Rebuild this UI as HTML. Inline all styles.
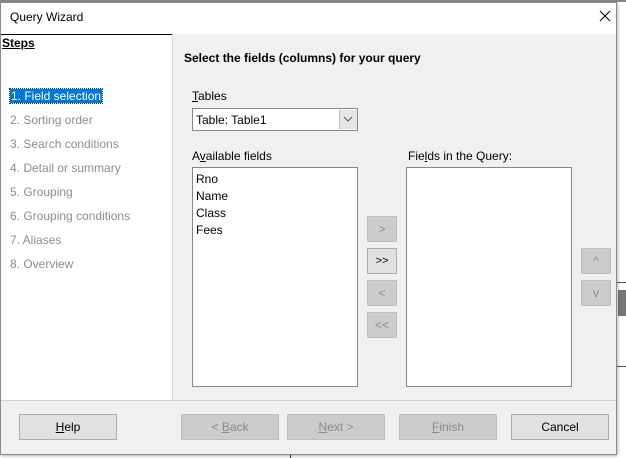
<!DOCTYPE html>
<html><head><style>
body{margin:0;width:626px;height:458px;overflow:hidden;background:#fff;font-family:"Liberation Sans",sans-serif;font-size:12px;position:relative}
.a{position:absolute}
.btn{position:absolute;height:24px;border:1px solid #adadad;background:#e1e1e1;text-align:center;line-height:24px;color:#000;box-sizing:border-box}
.dis{background:#cccccc;border-color:#bfbfbf;color:#8a8a8a}
.lb{position:absolute;background:#fff;border:1px solid #828790;box-sizing:border-box}
.st{position:absolute;left:10px;color:#8d8d8d}
</style></head><body>
<div class="a" style="left:617px;top:282px;width:9px;height:1px;background:#555"></div>
<div class="a" style="left:618px;top:290px;width:8px;height:26px;background:#777"></div>
<div class="a" style="left:617px;top:366px;width:9px;height:1px;background:#555"></div>
<div class="a" style="left:290px;top:455px;width:1px;height:3px;background:#333"></div>
<div class="a" style="left:0;top:0;width:626px;height:2px;background:#888"></div>
<div class="a" style="left:0;top:2px;width:617px;height:453px;background:#f0f0f0;border:1px solid #8a8a8a;box-sizing:border-box;box-shadow:1px 1px 3px rgba(0,0,0,.3)"></div>
<div class="a" style="left:1px;top:3px;width:615px;height:31px;background:#fff"></div>
<div class="a" style="left:10px;top:10px;font-size:12px">Query Wizard</div>
<svg class="a" style="left:599px;top:10px" width="12" height="12"><path d="M1 1L11 11M11 1L1 11" stroke="#000" stroke-width="1"/></svg>
<div class="a" style="left:1px;top:34px;width:171px;height:366px;background:#fff"></div>
<div class="a" style="left:1px;top:34px;width:171px;height:1px;background:#000"></div>
<div class="a" style="left:172px;top:34px;width:1px;height:366px;background:#d8d8d8"></div>
<div class="a" style="left:2px;top:36px;font-weight:bold;text-decoration:underline">Steps</div>
<div class="a" style="left:10px;top:89px;background:#0078d7;color:#fff;padding:0 1px;outline:1px dotted #333">1. Field selection</div>
<div class="st" style="top:113px">2. Sorting order</div>
<div class="st" style="top:137px">3. Search conditions</div>
<div class="st" style="top:161px">4. Detail or summary</div>
<div class="st" style="top:185px">5. Grouping</div>
<div class="st" style="top:209px">6. Grouping conditions</div>
<div class="st" style="top:233px">7. Aliases</div>
<div class="st" style="top:257px">8. Overview</div>
<div class="a" style="left:184px;top:51px;font-weight:bold">Select the fields (columns) for your query</div>
<div class="a" style="left:192px;top:89px"><u>T</u>ables</div>
<div class="lb" style="left:192px;top:108px;width:166px;height:23px"></div>
<div class="a" style="left:196px;top:113px">Table: Table1</div>
<div class="a" style="left:339px;top:110px;width:17px;height:19px;background:#e5e5e5;border-left:1px solid #bbb"></div>
<svg class="a" style="left:343px;top:116px" width="10" height="6"><path d="M1 1L5 5L9 1" stroke="#555" fill="none"/></svg>
<div class="a" style="left:192px;top:149px">A<u>v</u>ailable fields</div>
<div class="lb" style="left:192px;top:167px;width:166px;height:220px"></div>
<div class="a" style="left:196px;top:171px;line-height:17px">Rno<br>Name<br>Class<br>Fees</div>
<div class="a" style="left:408px;top:149px">Fie<u>l</u>ds in the Query:</div>
<div class="lb" style="left:406px;top:167px;width:166px;height:220px"></div>
<div class="btn dis" style="left:367px;top:216px;width:30px;height:26px;line-height:24px">&gt;</div>
<div class="btn" style="left:367px;top:248px;width:30px;height:26px;line-height:24px;font-size:11px">&gt;&gt;</div>
<div class="btn dis" style="left:367px;top:280px;width:30px;height:26px;line-height:24px">&lt;</div>
<div class="btn dis" style="left:367px;top:312px;width:30px;height:26px;line-height:24px">&lt;&lt;</div>
<div class="btn dis" style="left:581px;top:248px;width:30px;height:26px;line-height:24px">^</div>
<div class="btn dis" style="left:581px;top:280px;width:30px;height:26px;line-height:24px">v</div>
<div class="a" style="left:1px;top:400px;width:615px;height:1px;background:#d0d0d0"></div>
<div class="btn" style="left:19px;top:414px;width:98px;height:26px"><u>H</u>elp</div>
<div class="btn dis" style="left:181px;top:414px;width:98px;height:26px">&lt; <u>B</u>ack</div>
<div class="btn dis" style="left:287px;top:414px;width:98px;height:26px"><u>N</u>ext &gt;</div>
<div class="btn dis" style="left:399px;top:414px;width:98px;height:26px"><u>F</u>inish</div>
<div class="btn" style="left:511px;top:414px;width:98px;height:26px">Cancel</div>
</body></html>
